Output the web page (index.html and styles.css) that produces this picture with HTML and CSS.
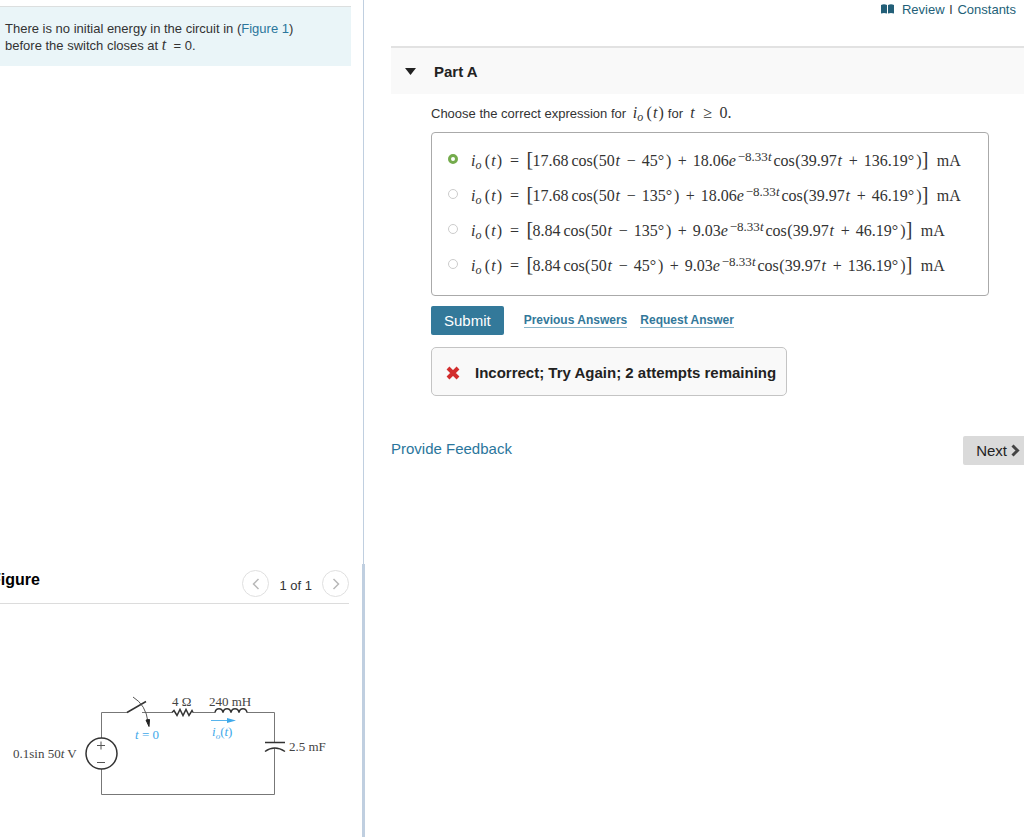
FILE: index.html
```html
<!DOCTYPE html>
<html lang="en">
<head>
<meta charset="utf-8">
<title>Part A</title>
<link rel="stylesheet" href="styles.css">
</head>
<body>
<div class="page">
  <aside class="side">
    <section class="intro">
      <p class="problem">There is no initial energy in the circuit in (<a href="#figure">Figure 1</a>)<br>before the switch closes at <i class="math">t</i>&nbsp; = 0.</p>
    </section>
    <section class="figure" id="figure">
      <header class="figure-head">
        <h2>Figure</h2>
        <div class="pager">
          <button type="button" aria-label="Previous figure"><svg width="8" height="12" viewBox="0 0 8 12"><path d="M6.5 1 1.5 6l5 5"/></svg></button>
          <span>1 of 1</span>
          <button type="button" aria-label="Next figure"><svg width="8" height="12" viewBox="0 0 8 12"><path d="M1.5 1l5 5-5 5"/></svg></button>
        </div>
      </header>
      <svg class="circuit" width="340" height="120" viewBox="0 0 340 120" role="img" aria-label="Series circuit">
        <g class="wire">
          <path d="M101.500 58V32.500H127M142 32.500H172M193 32.500H215M247 32.500H274.500V62M274.500 68V114.500H101.500V89"/>
        </g>
        <g class="part">
          <circle cx="101.500" cy="73.500" r="15.500"/>
          <path d="M127 32.500 146 21.500M172 32.500l2-2 3 5 3-6 3 6 3-6 3 6 3-5 1 2"/>
          <path d="M215 32.500c1-5 7-5 8 0 1-5 7-5 8 0 1-5 7-5 8 0 1-5 7-5 8 0"/>
          <path d="M265 62.500H285M265 71.500q9.500-7 20 0"/>
        </g>
        <path class="thin" d="M133 17q13 8 15 25M97 65.500h8M101 61.500v8M97 82.500h8"/>
        <path class="tip" d="M146 40l3.500-.5-.5 7z"/>
        <path class="flow" d="M211 40.500h20"/>
        <path class="flow-tip" d="M227 38l9 2.500-9 2.500z"/>
        <g class="label">
          <text x="13" y="78">0.1sin 50<tspan class="it">t</tspan> V</text>
          <text x="172" y="26">4 Ω</text>
          <text x="209" y="26">240 mH</text>
          <text x="289" y="71">2.5 mF</text>
        </g>
        <g class="label blue">
          <text x="135" y="59"><tspan class="it">t</tspan> = 0</text>
          <text x="212" y="56"><tspan class="it">i</tspan><tspan class="it sub" dy="3">o</tspan><tspan dy="-3">(</tspan><tspan class="it">t</tspan>)</text>
        </g>
      </svg>
    </section>
  </aside>

  <main class="main">
    <nav class="tools">
      <svg width="13" height="10" viewBox="0 0 13 10" aria-hidden="true"><path d="M0 1Q3-.5 6 1V9.500Q3 8.500 0 9.500ZM7 1Q10-.5 13 1V9.500Q10 8.500 7 9.500Z"/></svg>
      <a href="#review">Review</a><span class="bar">l</span><a href="#constants">Constants</a>
    </nav>
    <h2 class="part-head"><svg width="11" height="7" viewBox="0 0 11 7" aria-hidden="true"><path d="M0 0h11L5.500 7z"/></svg>Part A</h2>

    <form class="work">
      <p class="prompt">Choose the correct expression for <span class="math"><i>i</i><sub>o</sub><b class="p gap">(</b><i class="t">t</i><b class="p">)</b></span> for <span class="math"><i class="t">t</i><span class="rel">≥</span>0.</span></p>
      <div class="choices">
        <div class="choice"><input type="radio" name="expr" id="c1" checked><label class="math" for="c1"><i>i</i><sub>o</sub><b class="p gap">(</b><i class="t">t</i><b class="p">)</b><span class="rel">=</span><span class="br">[</span>17.68<span class="fn">cos</span><b class="p">(</b>50<i class="t">t</i><span class="op">−</span>45<span class="deg">°</span><b class="p">)</b><span class="op">+</span>18.06<i class="e">e</i><sup>−8.33<i>t</i></sup><span>cos</span><b class="p">(</b>39.97<i class="t">t</i><span class="op">+</span>136.19<span class="deg">°</span><b class="p">)</b><span class="br">]</span><span class="unit">mA</span></label></div>
        <div class="choice"><input type="radio" name="expr" id="c2"><label class="math" for="c2"><i>i</i><sub>o</sub><b class="p gap">(</b><i class="t">t</i><b class="p">)</b><span class="rel">=</span><span class="br">[</span>17.68<span class="fn">cos</span><b class="p">(</b>50<i class="t">t</i><span class="op">−</span>135<span class="deg">°</span><b class="p">)</b><span class="op">+</span>18.06<i class="e">e</i><sup>−8.33<i>t</i></sup><span>cos</span><b class="p">(</b>39.97<i class="t">t</i><span class="op">+</span>46.19<span class="deg">°</span><b class="p">)</b><span class="br">]</span><span class="unit">mA</span></label></div>
        <div class="choice"><input type="radio" name="expr" id="c3"><label class="math" for="c3"><i>i</i><sub>o</sub><b class="p gap">(</b><i class="t">t</i><b class="p">)</b><span class="rel">=</span><span class="br">[</span>8.84<span class="fn">cos</span><b class="p">(</b>50<i class="t">t</i><span class="op">−</span>135<span class="deg">°</span><b class="p">)</b><span class="op">+</span>9.03<i class="e">e</i><sup>−8.33<i>t</i></sup><span>cos</span><b class="p">(</b>39.97<i class="t">t</i><span class="op">+</span>46.19<span class="deg">°</span><b class="p">)</b><span class="br">]</span><span class="unit">mA</span></label></div>
        <div class="choice"><input type="radio" name="expr" id="c4"><label class="math" for="c4"><i>i</i><sub>o</sub><b class="p gap">(</b><i class="t">t</i><b class="p">)</b><span class="rel">=</span><span class="br">[</span>8.84<span class="fn">cos</span><b class="p">(</b>50<i class="t">t</i><span class="op">−</span>45<span class="deg">°</span><b class="p">)</b><span class="op">+</span>9.03<i class="e">e</i><sup>−8.33<i>t</i></sup><span>cos</span><b class="p">(</b>39.97<i class="t">t</i><span class="op">+</span>136.19<span class="deg">°</span><b class="p">)</b><span class="br">]</span><span class="unit">mA</span></label></div>
      </div>
      <div class="actions">
        <button class="submit" type="submit">Submit</button>
        <a href="#previous">Previous Answers</a>
        <a href="#request">Request Answer</a>
      </div>
      <div class="result">
        <svg width="14" height="14" viewBox="0 0 14 14" aria-hidden="true"><path d="M2 2l10 10M12 2L2 12"/></svg>
        Incorrect; Try Again; 2 attempts remaining
      </div>
    </form>

    <footer class="foot">
      <a href="#feedback">Provide Feedback</a>
      <button class="next" type="button">Next<svg width="9" height="13" viewBox="0 0 9 13" aria-hidden="true"><path d="M1.500 1.500l5 5-5 5"/></svg></button>
    </footer>
  </main>
</div>
</body>
</html>
```
FILE: styles.css
```css
* { box-sizing: border-box; }
body {
  margin: 0;
  background: #fff;
  color: #333;
  font-family: "Liberation Sans", Arial, sans-serif;
  font-size: 13px;
  overflow-x: hidden;
}
h2, p { margin: 0; }
a { color: #2a769c; text-decoration: none; }
button { font-family: inherit; cursor: pointer; }

.page { display: flex; min-height: 100vh; }
.side { width: 365px; flex: none; display: flex; flex-direction: column; }
.intro {
  flex: 1;
  padding: 6px 12px 0 0;
  margin-right: 1px;
  border-right: 1px solid #c0cfe0;
}
.problem {
  padding: 14px 5px 12px;
  border-top: 1px solid #dcdfdf;
  background: #eaf5f8;
  line-height: 16px;
}
.problem .math { font-size: 16px; line-height: 16px; }

.figure { border-right: 3px solid #c0cfe0; overflow: hidden; }
.figure-head {
  display: flex;
  justify-content: space-between;
  margin-right: 13px;
  padding: 6px 0;
  border-bottom: 1px solid #dcdcdc;
}
.figure-head h2 { margin-left: -9px; color: #000; font-size: 16px; line-height: 20px; }
.pager { display: flex; align-items: center; gap: 10px; }
.pager span { padding-top: 4px; }
.pager button {
  display: grid;
  place-items: center;
  width: 27px;
  height: 27px;
  padding: 0;
  border: 1px solid #e0e0e0;
  border-radius: 50%;
  background: #fff;
}
.pager path { fill: none; stroke: #b8b8b8; stroke-width: 1.5; }

.circuit { display: block; margin: 76px 0 37px; }
.wire { fill: none; stroke: #777; }
.part { fill: none; stroke: #333; stroke-width: 1.5; }
.thin { fill: none; stroke: #555; }
.tip { fill: #222; stroke: #222; }
.flow { stroke: #58b4ec; }
.flow-tip { fill: #3fa9ea; }
.label { fill: #444; font-family: "Liberation Serif", "Times New Roman", serif; font-size: 13px; }
.blue { fill: #3fa9ea; }
.it { font-style: italic; }
.sub { font-size: 9px; }

.main { flex: 1; min-width: 0; padding-left: 26px; }
.tools {
  display: flex;
  justify-content: flex-end;
  align-items: center;
  height: 46px;
  padding: 0 8px 28px 0;
}
.tools a { color: #235f78; }
.tools svg { margin-right: 8px; fill: #235f78; }
.bar { margin: 0 5px; }
.part-head {
  display: flex;
  align-items: center;
  gap: 18px;
  height: 48px;
  padding-left: 14px;
  border-top: 2px solid #e2e2e2;
  background: #f9f9f9;
  color: #222;
  font-size: 15px;
}
.part-head svg { fill: #222; }

.work { padding: 8px 35px 0 40px; }
.prompt { line-height: 22px; margin-bottom: 8px; height: 22px; }
.prompt .math { margin-left: 3px; }

.math { font-family: "Liberation Serif", "Times New Roman", serif; font-size: 16px; white-space: nowrap; }
.math sub, .math sup { line-height: 0; }
.math sub { font-size: 12px; font-style: italic; vertical-align: -3px; }
.math sup { font-size: 13px; vertical-align: 5px; margin: 0 2px 0 1px; }
.p { display: inline-block; width: 6px; font-weight: normal; text-align: center; }
.gap { margin-left: 3px; }
.t { display: inline-block; width: 6px; text-align: center; }
.e { display: inline-block; width: 8px; }
.rel { display: inline-block; width: 24px; text-align: center; }
.op { display: inline-block; width: 21px; text-align: center; }
.deg { display: inline-block; width: 8px; }
.fn { margin-left: 3px; }
.br { display: inline-block; width: 6px; font-size: 20px; line-height: 20px; text-align: center; }
.unit { margin-left: 9px; }

.choices {
  display: flex;
  flex-direction: column;
  gap: 5px;
  padding: 11px 16px 16px;
  border: 1px solid #aaa;
  border-radius: 4px;
}
.choice { display: flex; align-items: center; gap: 13px; height: 30px; }
.choice input {
  appearance: none;
  flex: none;
  width: 10px;
  height: 10px;
  margin: 0;
  border: 1px solid #ccc;
  border-radius: 50%;
  background: #fff;
}
.choice input:checked { border: 3px solid #74ab4c; }

.actions { display: flex; align-items: center; margin: 10px 0 12px; }
.actions a {
  margin-right: 13px;
  border-bottom: 1px solid #8ab5c9;
  color: #33789a;
  font-size: 12px;
  font-weight: bold;
  line-height: 13px;
}
.submit {
  height: 29px;
  margin-right: 20px;
  padding: 0 13px;
  border: 0;
  border-radius: 2px;
  background: #33799a;
  color: #fff;
  font-size: 15px;
}
.result {
  display: flex;
  align-items: center;
  gap: 15px;
  width: fit-content;
  height: 49px;
  padding: 2px 10px 0 14px;
  border: 1px solid #c4c4c4;
  border-radius: 5px;
  background: #f9f9f9;
  color: #222;
  font-size: 15px;
  font-weight: bold;
}
.result path { stroke: #d22d2d; stroke-width: 4; }

.foot { display: flex; justify-content: space-between; margin-top: 40px; font-size: 15px; }
.foot a { padding-top: 4px; }
.next {
  display: flex;
  align-items: center;
  gap: 4px;
  height: 29px;
  padding: 0 4px 1px 13px;
  border: 0;
  border-radius: 2px 0 0 2px;
  background: #dadada;
  color: #222;
  font-size: 15px;
}
.next path { fill: none; stroke: #444; stroke-width: 3; }
```
